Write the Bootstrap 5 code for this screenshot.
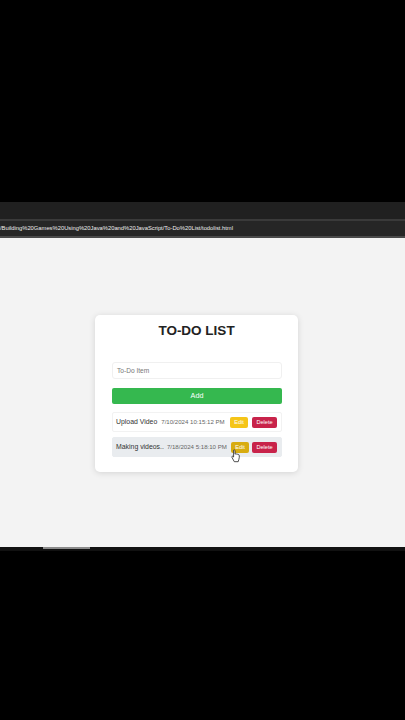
<!DOCTYPE html>
<html lang="en"><head><meta charset="utf-8"><title>To-Do List</title>
<link href="https://cdn.jsdelivr.net/npm/bootstrap@5.3.0/dist/css/bootstrap.min.css" rel="stylesheet">
<style>
html,body{height:720px;overflow:hidden;background:#000;font-family:"Liberation Sans",Arial,sans-serif}
.frame-shell{height:720px;background:#000;padding-top:202px}
.tab-strip{height:17px;background:#202020}
.addr-strip{height:19px;background:#262626;border-top:2px solid #3a3a3a;border-bottom:2px solid #4a4a4a;color:#eee;font-size:5.8px;line-height:15px;white-space:nowrap;overflow:hidden}
.page-area{height:309px;background:#f3f3f3;padding-top:77px}
.todo-box{width:203px;height:157px;margin-left:95px;background:#fff;border-radius:5px;box-shadow:0 1px 6px rgba(0,0,0,.13);padding:8px 17px 0}
.todo-title{font-size:13.5px;font-weight:700;color:#222;line-height:16px;margin:0 0 23px;text-align:center}
.todo-input{width:170px;height:17px;border:1px solid #f0f0f0;border-radius:3px;padding:0 4px;font-size:6.6px;color:#777;line-height:15px;margin-bottom:9px;background:#fff}
.todo-add{width:170px;height:16px;background:#35b84f;color:#fff;border-radius:2px;font-size:7.2px;line-height:16px;text-align:center;margin-bottom:8px}
.todo-row{width:170px;height:20px;border:1px solid #f2f2f2;border-radius:2px;padding:0 4px 0 3px;margin-bottom:5px;font-size:6.9px;color:#333;white-space:nowrap}
.todo-row.hovered{background:#e9ecef;border-color:#e9ecef}
.todo-date{font-size:6.1px;color:#666;margin-left:4px}
.hovered .todo-date{margin-left:3px}
.act-edit,.act-del{color:#fff;border-radius:2px;font-size:5.6px;height:11px;line-height:11px;text-align:center;flex:none}
.act-edit{width:18px;background:#f5c518;margin-left:auto}
.hovered .act-edit{background:#d8ac10}
.act-del{width:25px;background:#c8234a;margin-left:4px}
.hovered .act-del{margin-left:3px}
.hand-cursor{position:absolute;left:231px;top:449px;width:10px;height:14px}
.scroll-strip{height:4px;background:#111}
.scroll-thumb{display:block;width:47px;height:2px;margin-left:43px;background:#8a8a8a}
</style></head><body>
<div class="frame-shell">
<div class="tab-strip"></div>
<div class="addr-strip">/Building%20Games%20Using%20Java%20and%20JavaScript/To-Do%20List/todolist.html</div>
<div class="page-area">
<div class="todo-box">
<h1 class="todo-title">TO-DO LIST</h1>
<div class="todo-input">To-Do Item</div>
<div class="todo-add">Add</div>
<div class="todo-row d-flex align-items-center"><span>Upload Video</span><span class="todo-date">7/10/2024 10:15:12 PM</span><span class="act-edit">Edit</span><span class="act-del">Delete</span></div>
<div class="todo-row hovered d-flex align-items-center"><span>Making videos..</span><span class="todo-date">7/18/2024 5:18:10 PM</span><span class="act-edit">Edit</span><span class="act-del">Delete</span></div>
</div>
</div>
<div class="scroll-strip"><span class="scroll-thumb"></span></div>
</div>
<svg class="hand-cursor" viewBox="0 0 10 14"><path d="M2.6 1.2c.6-.6 1.4-.2 1.4.6v3.4l.5-.3c.5-.2 1 0 1.2.3.5-.2 1 0 1.2.4.6-.2 1.2.1 1.3.7.2 1 .2 2.700-.3 4l-.7 2.400H3.300L.9 8.300c-.4-.6.4-1.400 1-.9l.7.600z" fill="#fff" stroke="#222" stroke-width=".8" stroke-linejoin="round"/></svg>
</body></html>
